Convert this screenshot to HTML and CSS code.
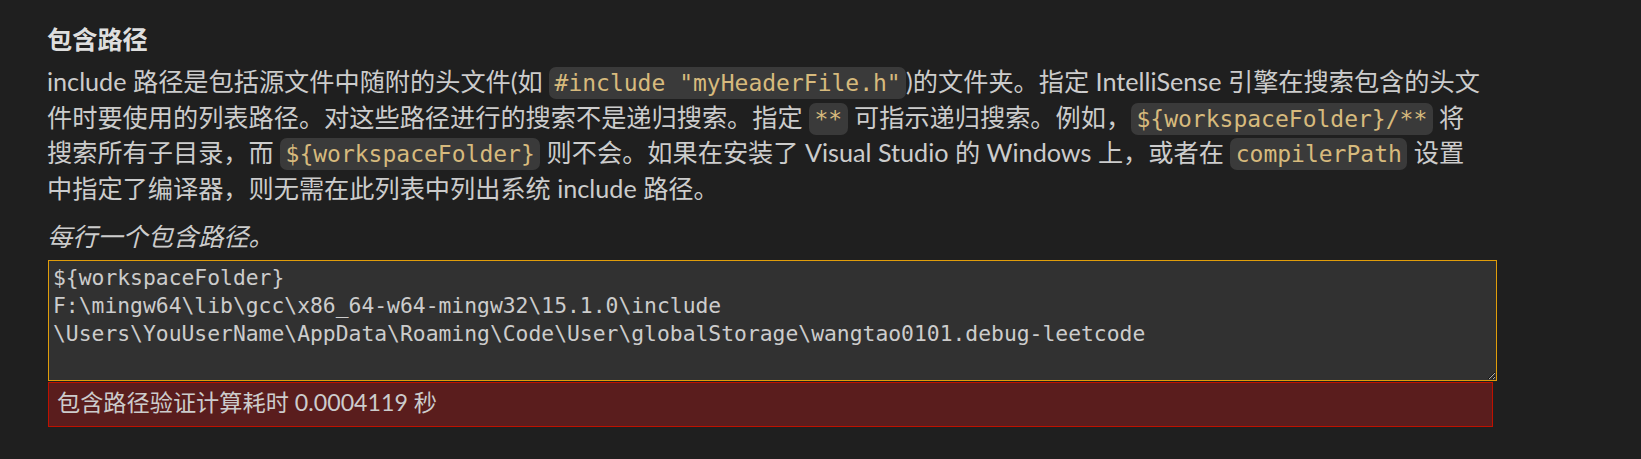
FILE: index.html
```html
<!DOCTYPE html>
<html lang="zh-CN">
<head>
<meta charset="utf-8">
<title>包含路径</title>
<link rel="stylesheet" href="styles.css">
</head>
<body>
<div class="setting">
  <div class="setting-title">包含路径</div>
  <div class="setting-desc">include 路径是包括源文件中随附的头文件(如 <code>#include "myHeaderFile.h"</code>)的文件夹。指定 IntelliSense 引擎在搜索包含的头文<br>件时要使用的列表路径。对这些路径进行的搜索不是递归搜索。指定 <code>**</code> 可指示递归搜索。例如，<code>${workspaceFolder}/**</code> 将<br>搜索所有子目录，而 <code>${workspaceFolder}</code> 则不会。如果在安装了 Visual Studio 的 Windows 上，或者在 <code>compilerPath</code> 设置<br>中指定了编译器，则无需在此列表中列出系统 include 路径。</div>
  <div class="setting-hint">每行一个包含路径。</div>
  <textarea class="setting-input" spellcheck="false">${workspaceFolder}
F:\mingw64\lib\gcc\x86_64-w64-mingw32\15.1.0\include
\Users\YouUserName\AppData\Roaming\Code\User\globalStorage\wangtao0101.debug-leetcode</textarea>
  <div class="setting-error">包含路径验证计算耗时 0.0004119 秒</div>
</div>
</body>
</html>
```
FILE: styles.css
```css
html, body {
  margin: 0;
  padding: 0;
  background: #1f1f1f;
}

body {
  font-family: Lato, "Noto Sans CJK SC", sans-serif;
  color: #cccccc;
}

.setting {
  padding: 21px 0 0 47px;
  display: flex;
  flex-direction: column;
  align-items: flex-start;
}

.setting-title {
  font-size: 25.2px;
  line-height: 36px;
  font-weight: 600;
  color: #dedede;
}

.setting-desc {
  margin-top: 7px;
  font-size: 25.2px;
  line-height: 35.6px;
  white-space: nowrap;
}

.setting-desc code {
  font-family: "DejaVu Sans Mono", monospace;
  font-size: 23px;
  line-height: 20px;
  color: #d7ba7d;
  background: #3a3a3a;
  padding: 3px 5.4px;
  border-radius: 7px;
}

.setting-hint {
  margin-top: 13px;
  font-size: 25.2px;
  line-height: 35.6px;
  font-style: italic;
}

.setting-input {
  margin: 5px 0 0 1px;
  box-sizing: border-box;
  width: 1449px;
  height: 121px;
  padding: 3px 4px 4px;
  background: #313131;
  color: #cccccc;
  border: 1px solid #e09d0a;
  border-radius: 0;
  outline: none;
  font-family: "DejaVu Sans Mono", monospace;
  font-size: 21.35px;
  line-height: 28px;
  color-scheme: dark;
  resize: both;
}

.setting-error {
  margin: 1px 0 0 1px;
  box-sizing: border-box;
  width: 1445px;
  height: 45px;
  padding: 5px 8px 9px;
  background: #5a1d1d;
  border: 1px solid #be1100;
  font-size: 23.2px;
  line-height: 28px;
  color: #cccccc;
}
```
